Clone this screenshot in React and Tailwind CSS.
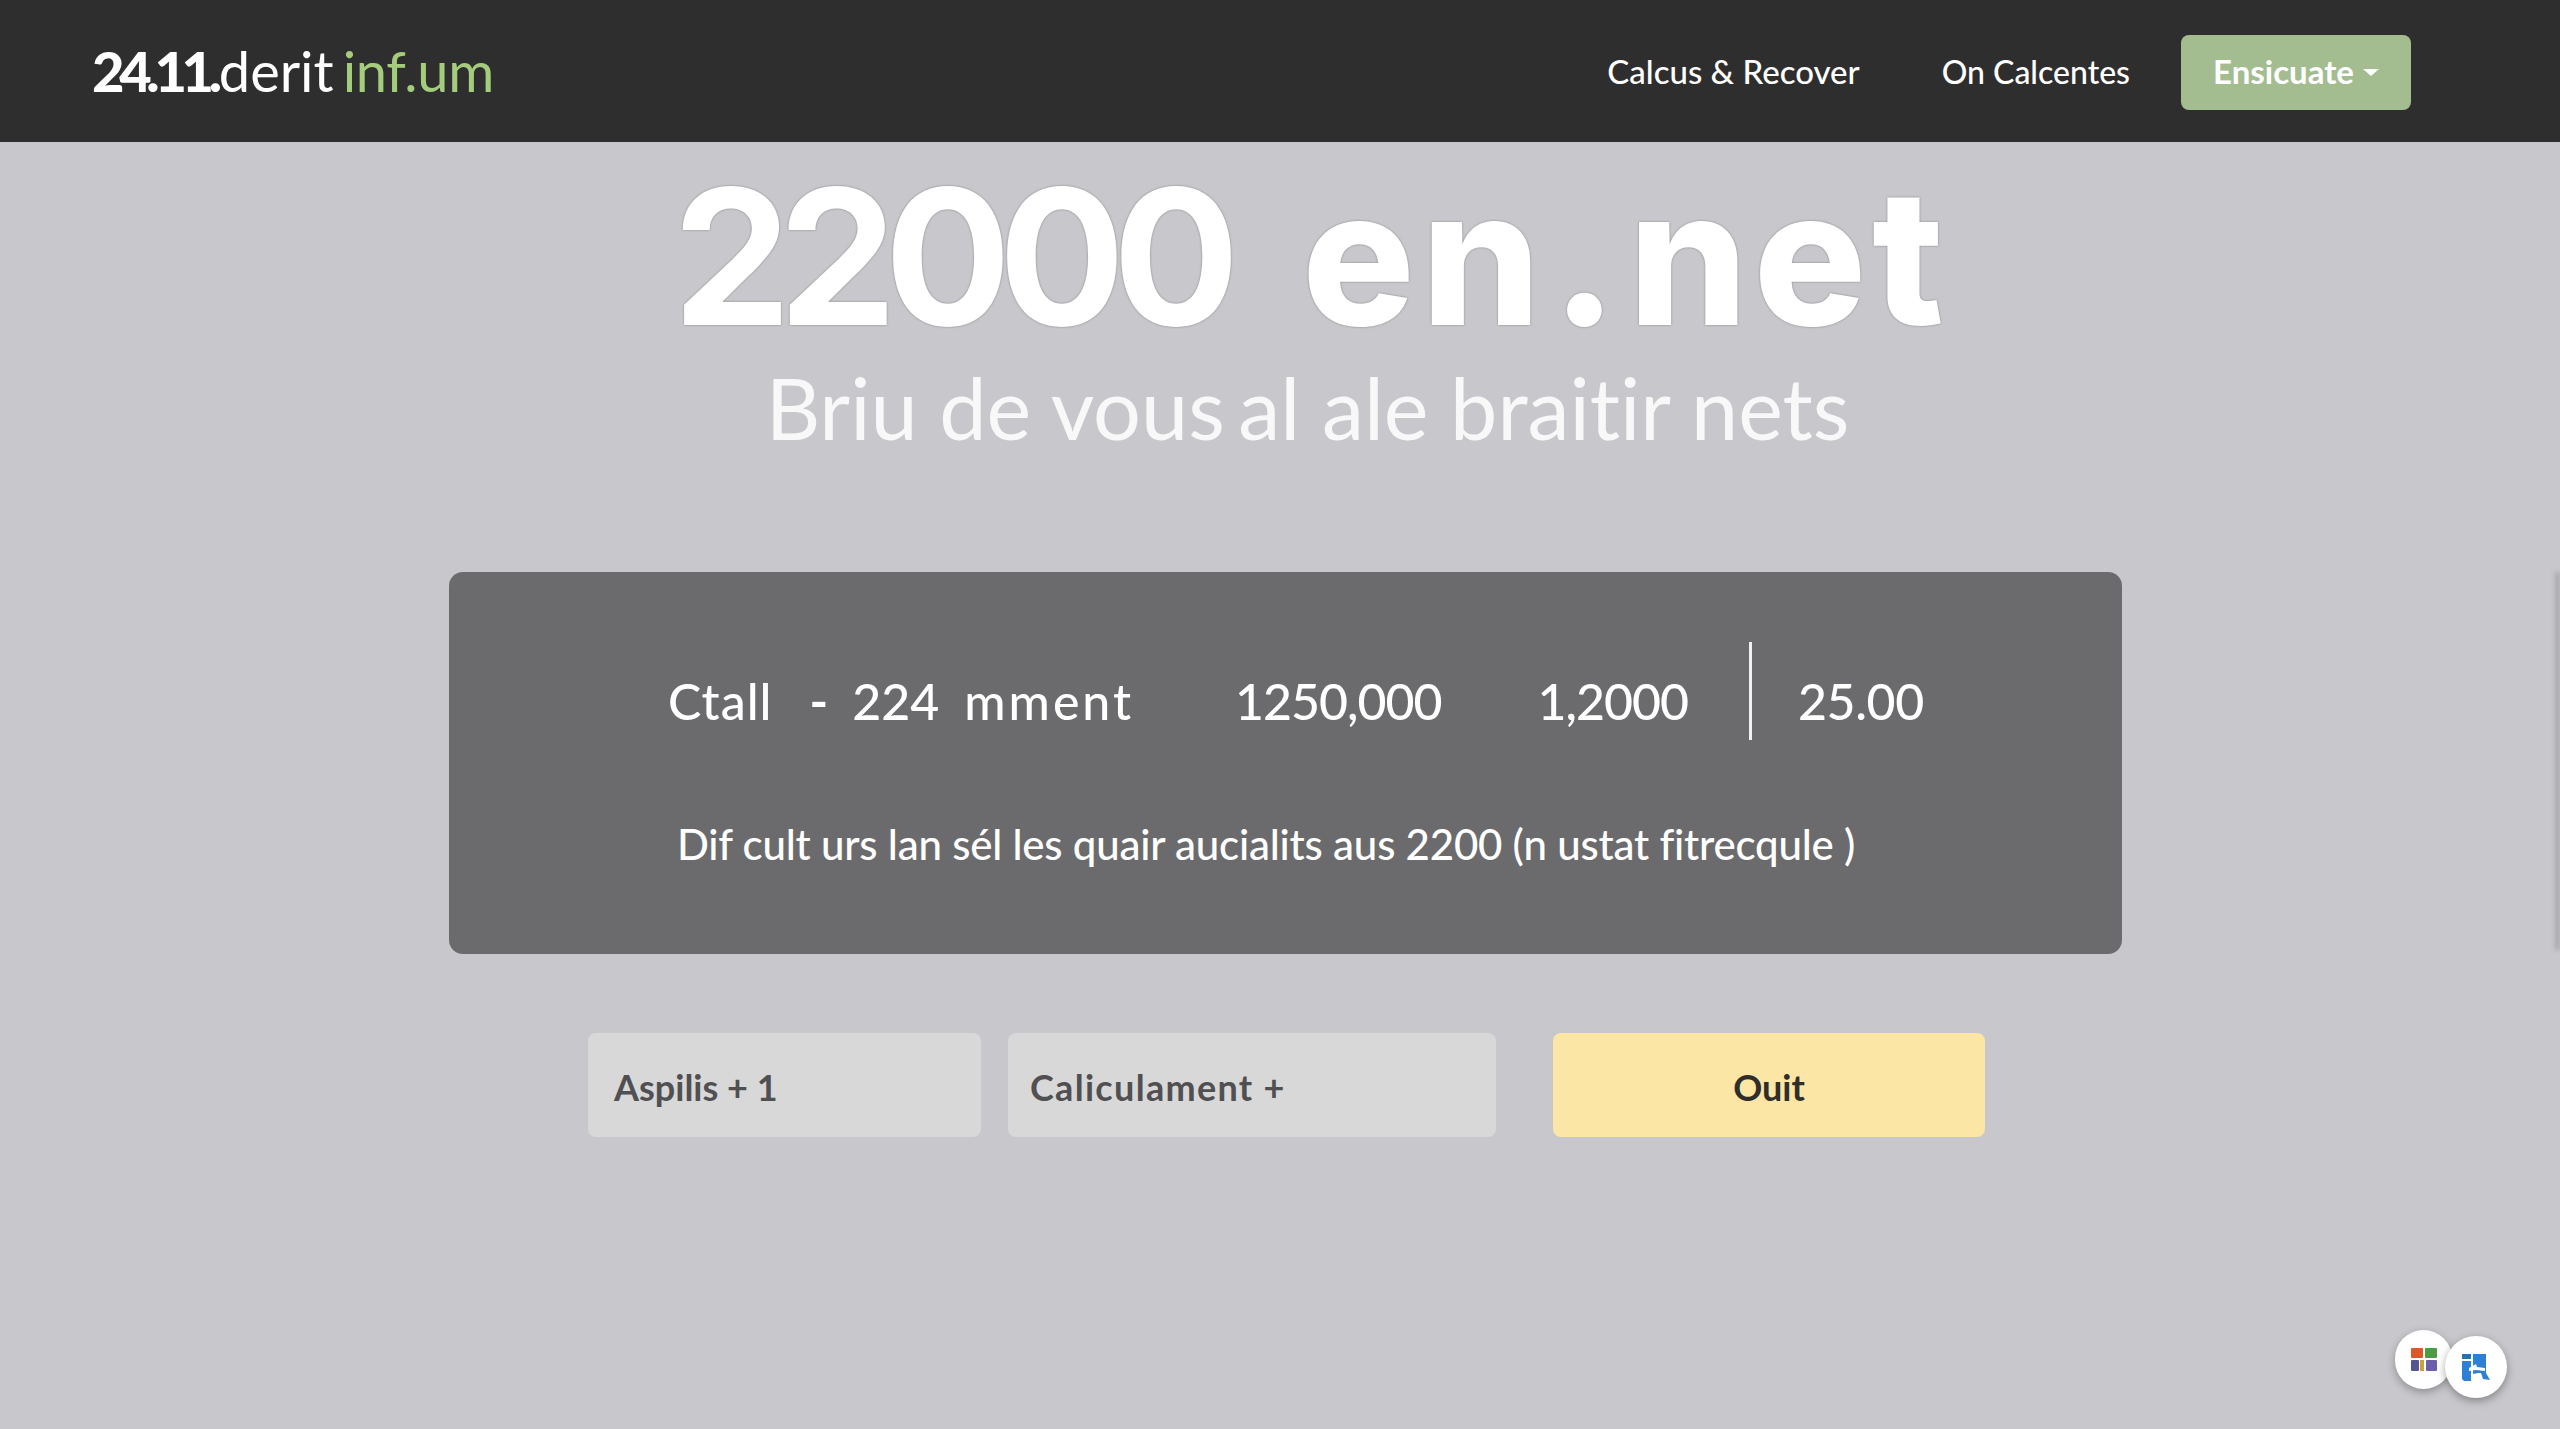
import React from 'react';

const inter = { fontFamily: 'Inter, sans-serif' };
const lato = { fontFamily: 'Lato, sans-serif' };

function FloatingBadges() {
  return (
    <div className="absolute left-[2395px] top-[1330px] w-[112px] h-[68px]">
      <div className="absolute left-0 top-0 w-[57px] h-[59px] rounded-full bg-white shadow-[0_3px_8px_rgba(0,0,0,0.3)] flex items-center justify-center">
        <svg width="26" height="23" viewBox="0 0 26 23">
          <rect x="0" y="0" width="12" height="10" rx="1" fill="#d9582c" />
          <rect x="14" y="0" width="12" height="10" rx="1" fill="#4f9a45" />
          <rect x="0" y="12" width="8" height="11" rx="1" fill="#55558f" />
          <rect x="9" y="12" width="4" height="11" fill="#c9a23c" />
          <rect x="15" y="12" width="11" height="11" rx="1" fill="#6a5fa8" />
        </svg>
      </div>
      <div className="absolute left-[50px] top-[6px] w-[62px] h-[62px] rounded-full bg-white shadow-[0_3px_8px_rgba(0,0,0,0.35)] flex items-center justify-center">
        <svg width="28" height="27" viewBox="0 0 28 27">
          <rect x="0" y="0" width="9" height="5" fill="#2f6fa8" />
          <path d="M0 7h9v20H2l-2-2zM11 0h13v19l4 7-7-1-2-6h-3l-5 1z" fill="#2f80d4" />
          <path d="M7 14l7-4 1 3 8 1v3l-9-1-7 1z" fill="#ffffff" />
        </svg>
      </div>
    </div>
  );
}

export default function App() {
  return (
    <div className="relative min-h-[1429px] bg-[#c8c7cb] overflow-hidden [font-variant-ligatures:none]" style={inter}>
      {/* NAV */}
      <header className="h-[142px] bg-[#2f2e2f] flex items-center justify-between pl-[92px] pr-[149px]">
        <div className="text-[56px] leading-none whitespace-nowrap" style={lato}>
          <span className="font-black text-white tracking-[-5.3px]">24.11.</span>
          <span className="text-white ml-[2px]">derit</span>
          <span className="text-[#a3cc7c] ml-[9px] tracking-[-0.3px]">inf.um</span>
        </div>
        <nav className="flex items-center mt-[2px]" style={lato}>
          <a className="text-[33px] font-medium text-white whitespace-nowrap">Calcus &amp; Recover</a>
          <a className="ml-[82px] text-[32px] font-medium text-white whitespace-nowrap">On Calcentes</a>
          <button className="ml-[51px] w-[230px] h-[75px] rounded-[8px] bg-[#a3bd91] text-white text-[33px] font-bold flex items-center justify-center gap-[9px]">
            Ensicuate
            <span className="w-0 h-0 border-x-[8px] border-x-transparent border-t-[7px] border-t-white" />
          </button>
        </nav>
      </header>

      {/* HERO */}
      <section className="flex flex-col items-center pl-[62px] pt-[10px]">
        <h1 className="text-[188px] leading-[209px] font-extrabold text-white whitespace-nowrap drop-shadow-[0_0_1px_rgba(90,90,90,0.6)]">
          <span className="font-bold tracking-[-12.6px]">22000</span>
          <span className="ml-[75px] tracking-[6.5px]">en</span>
          <span className="ml-[4px]">.</span>
          <span className="ml-[11px] tracking-[5.5px]">net</span>
        </h1>
        <p className="mr-[7px] text-[84.5px] leading-[94px] text-[#f8f8f8] whitespace-nowrap" style={lato}>
          Briu de vous<span className="ml-[-8px]"> al ale braitir nets</span>
        </p>
      </section>

      {/* STATS CARD */}
      <section className="ml-[449px] mt-[117px] w-[1673px] h-[382px] rounded-[14px] bg-[#6b6b6d] pt-[80px] text-white">
        <div className="flex items-center h-[98px] text-[50px] whitespace-nowrap pl-[219px]" style={lato}>
          <span className="font-medium tracking-[1px]">Ctall</span>
          <span className="ml-[37px] font-bold">-</span>
          <span className="ml-[24px] font-medium">224</span>
          <span className="ml-[25px] font-medium tracking-[3px]">mment</span>
          <span className="ml-[101px] font-medium tracking-[-1px]">1250,000</span>
          <span className="ml-[96px] font-medium tracking-[-1px]">1,2000</span>
          <span className="ml-[61px] mt-[-20px] w-[3px] h-[98px] bg-[#f1f1f1]" />
          <span className="ml-[46px] font-medium tracking-[-0.4px]">25.00</span>
        </div>
        <p className="mt-[68px] pl-[228px] text-[42px] leading-[52px] font-medium tracking-[-0.2px] whitespace-nowrap" style={lato}>
          Dif cult urs lan sél les quair aucialits aus 2200 (n ustat fitrecqule )
        </p>
      </section>

      {/* ACTIONS */}
      <section className="ml-[588px] mt-[79px] flex items-stretch h-[104px] text-[36px] font-bold whitespace-nowrap" style={lato}>
        <button className="w-[393px] rounded-[8px] bg-[#d8d8d9] text-[#505052] text-left pl-[26px] pt-[4px]">Aspilis + 1</button>
        <button className="ml-[27px] w-[488px] rounded-[8px] bg-[#d8d8d9] text-[#505052] text-left pl-[22px] pt-[4px] tracking-[1.3px]">Caliculament +</button>
        <button className="ml-[57px] w-[432px] rounded-[8px] bg-[#fbe6a6] text-[#2f2e2a] pt-[4px]">Ouit</button>
      </section>

      {/* edge shadow */}
      <div className="absolute right-0 top-[572px] w-[5px] h-[378px] bg-[#a9a9ab] blur-[2px]" />

      <FloatingBadges />
    </div>
  );
}
